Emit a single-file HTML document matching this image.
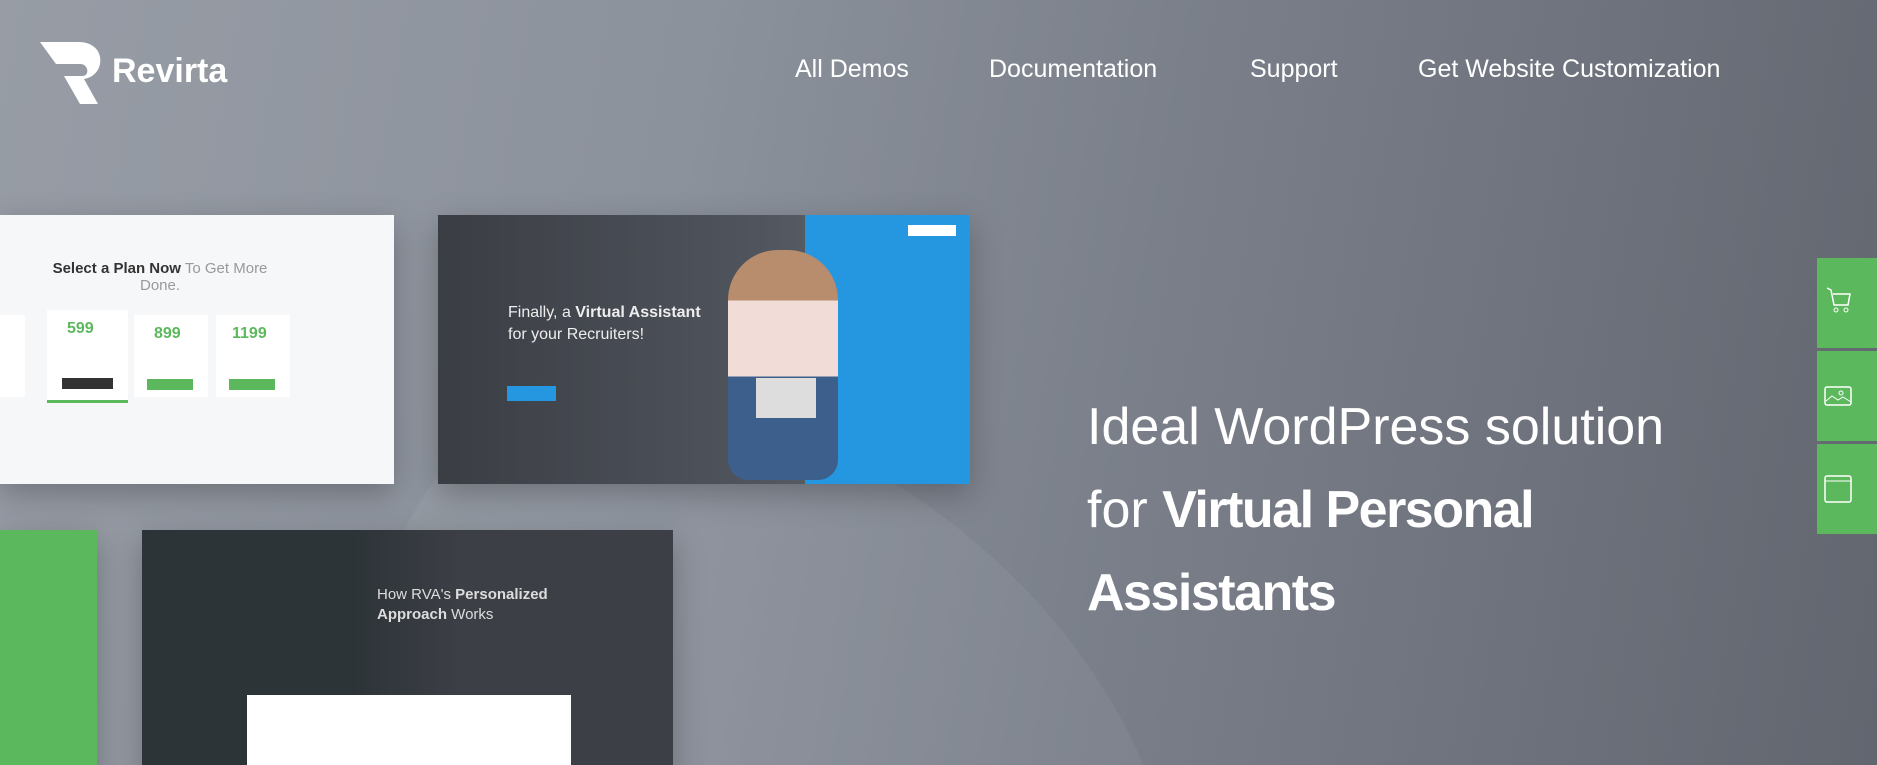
<!DOCTYPE html>
<html style="overflow:hidden;width:1877px;height:765px"><head><meta charset="utf-8"><style>
*{margin:0;padding:0;box-sizing:border-box}
html,body{width:1877px;height:765px;overflow:hidden}
body{font-family:"Liberation Sans",sans-serif;color:#fff;background:#7a7f8a}
#w{position:relative;width:1877px;height:765px;overflow:hidden;
background:linear-gradient(100deg,#979ca5 0%,#8c929c 35%,#7a7f8a 60%,#62666f 100%)}
.abs{position:absolute}
.nav{top:55px;font-size:25px;color:#fff;white-space:nowrap}
.card{position:absolute;box-shadow:0 10px 30px rgba(0,0,0,.25)}
.g{background:#5cb85c}
.side{position:absolute;left:1817px;width:60px;height:90px;background:#5cb85c}
</style></head><body><div id="w">
<div class="abs" style="left:330px;top:470px;width:900px;height:600px;border-radius:50%;background:rgba(255,255,255,.05);transform:rotate(40deg)"></div>
<svg class="abs" style="left:40px;top:42px" width="64" height="62" viewBox="0 0 64 62"><path d="M0 0H38C56 0 62 12 60 22C58 32 50 36 44 37L58 62H40L24 34H42C47 34 48 30 47 27C46 24 44 22 40 22H16Z" fill="#fff"/></svg>
<div class="abs" style="left:112px;top:52px;font-size:34px;font-weight:bold">Revirta</div>
<div class="abs nav" style="left:795px">All Demos</div>
<div class="abs nav" style="left:989px">Documentation</div>
<div class="abs nav" style="left:1250px">Support</div>
<div class="abs nav" style="left:1418px">Get Website Customization</div>

<div class="card" style="left:0;top:215px;width:394px;height:269px;background:#f6f7f9;color:#333">
 <div class="abs" style="left:45px;top:45px;width:230px;text-align:center;font-size:15px"><b>Select a Plan Now</b> <span style="color:#999">To Get More Done.</span></div>
 <div class="abs" style="left:0;top:100px;width:25px;height:82px;background:#fff"></div>
 <div class="abs" style="left:47px;top:95px;width:81px;height:93px;background:#fff;border-bottom:3px solid #5cb85c"><div style="color:#5cb85c;font-size:16px;font-weight:bold;margin:10px 20px">599</div><div class="abs" style="left:15px;top:68px;width:51px;height:11px;background:#333"></div></div>
 <div class="abs" style="left:134px;top:100px;width:74px;height:82px;background:#fff"><div style="color:#5cb85c;font-size:16px;font-weight:bold;margin:10px 20px">899</div><div class="abs" style="left:13px;top:64px;width:46px;height:11px;background:#5cb85c"></div></div>
 <div class="abs" style="left:216px;top:100px;width:74px;height:82px;background:#fff"><div style="color:#5cb85c;font-size:16px;font-weight:bold;margin:10px 16px">1199</div><div class="abs" style="left:13px;top:64px;width:46px;height:11px;background:#5cb85c"></div></div>
</div>

<div class="card" style="left:438px;top:215px;width:532px;height:269px;background:linear-gradient(90deg,#3a3d44,#50545c 60%,#6a6e75)">
 <div class="abs" style="left:367px;top:0;width:165px;height:269px;background:#2497e0"></div>
 <div class="abs" style="left:290px;top:35px;width:110px;height:230px;border-radius:50px 50px 20px 20px;background:linear-gradient(#b88d6e 0 22%,#f2dcd8 22% 55%,#3d5f8c 55%)"></div>
 <div class="abs" style="left:318px;top:163px;width:60px;height:40px;background:#ddd"></div>
 <div class="abs" style="left:70px;top:87px;font-size:16px;color:#eee;line-height:22px">Finally, a <b>Virtual Assistant</b><br>for your Recruiters!</div>
 <div class="abs" style="left:69px;top:171px;width:49px;height:15px;background:#2497e0"></div>
 <div class="abs" style="left:470px;top:10px;width:48px;height:11px;background:#fff"></div>
</div>

<div class="card g" style="left:0;top:530px;width:97px;height:260px"></div>
<div class="card" style="left:142px;top:530px;width:531px;height:260px;background:linear-gradient(90deg,#2d3438 0 40%,#3c3f46 60%)">
 <div class="abs" style="left:235px;top:55px;font-size:15px;line-height:20px;color:#ddd">How RVA's <b>Personalized</b><br><b>Approach</b> Works</div>
 <div class="abs" style="left:105px;top:165px;width:324px;height:100px;background:#fff"></div>
</div>

<div class="abs" style="left:1087px;top:386px;font-size:52px;font-weight:300;line-height:83px;white-space:nowrap;letter-spacing:0px">Ideal WordPress solution<br>for <b style="font-weight:900;letter-spacing:-1.5px">Virtual Personal</b><br><b style="font-weight:900;letter-spacing:-1.5px">Assistants</b></div>

<div class="side" style="top:258px"><svg width="60" height="90"><path d="M10 30l4 2 3 15h14l2-11H16" fill="none" stroke="#fff" stroke-width="1.5"/><circle cx="19" cy="52" r="2" fill="none" stroke="#fff"/><circle cx="29" cy="52" r="2" fill="none" stroke="#fff"/></svg></div>
<div class="side" style="top:351px"><svg width="60" height="90"><rect x="8" y="36" width="26" height="18" rx="2" fill="none" stroke="#fff" stroke-width="1.5"/><circle cx="24" cy="42" r="2" fill="none" stroke="#fff"/><path d="M9 50l6-5 6 4 5-3 8 5" fill="none" stroke="#fff"/></svg></div>
<div class="side" style="top:444px"><svg width="60" height="90"><rect x="8" y="32" width="26" height="26" rx="2" fill="none" stroke="#fff" stroke-width="1.5"/><path d="M8 37h26" stroke="#fff"/></svg></div>
</div></body></html>
